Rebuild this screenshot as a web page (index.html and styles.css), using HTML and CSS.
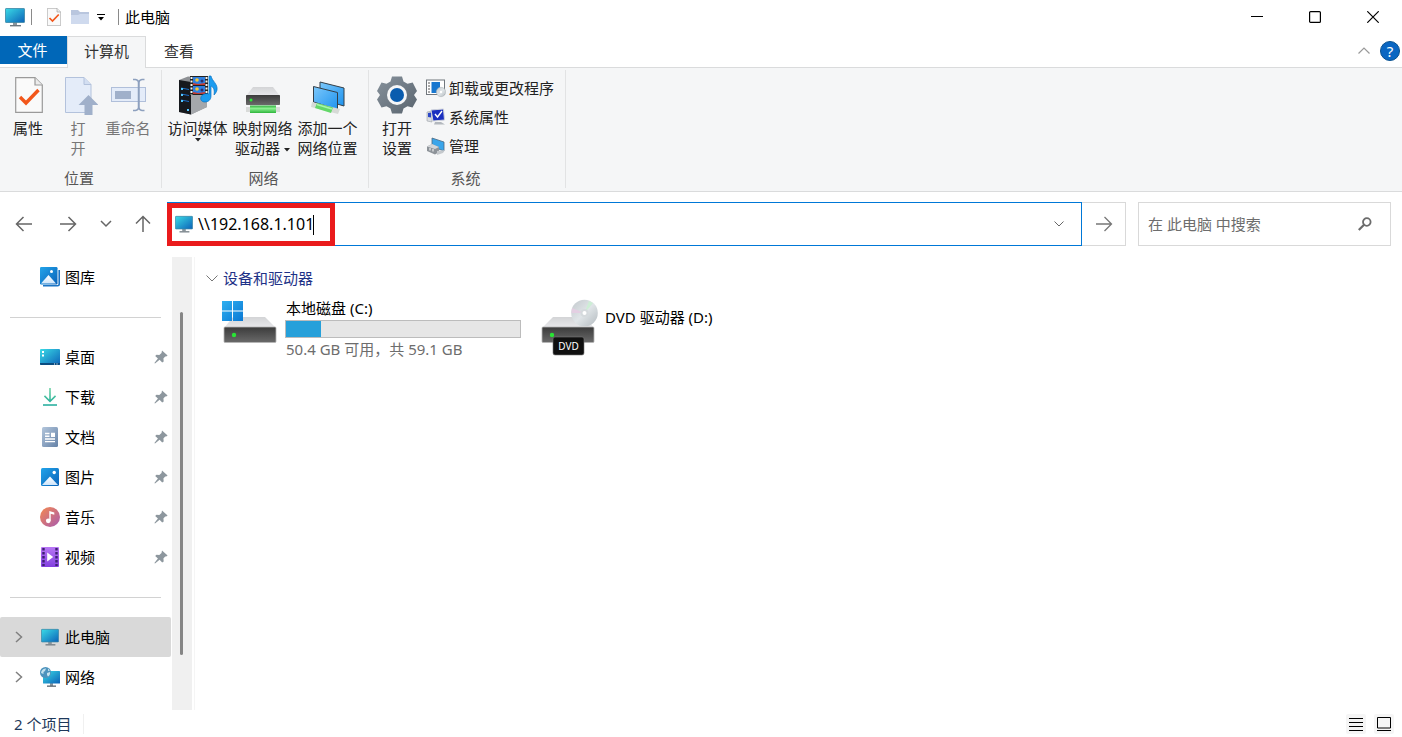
FILE: index.html
```html
<!DOCTYPE html>
<html lang="zh-CN">
	<head>
		<meta charset="UTF-8" />
		<meta name="viewport" content="width=device-width, initial-scale=1.0" />
		<title>此电脑</title>
		<link rel="stylesheet" href="styles.css">
	</head>
	<body>
		<!-- shared gradients and symbols -->
		<svg class="defs" width="0" height="0" aria-hidden="true">
			<defs>
				<linearGradient id="screen" x1="0" y1="0" x2="1" y2="1">
					<stop offset="0" stop-color="#3adbe6" />
					<stop offset="1" stop-color="#0c62b8" />
				</linearGradient>
				<linearGradient id="blue" x1="0" y1="0" x2="1" y2="1">
					<stop offset="0" stop-color="#22a4ea" />
					<stop offset="1" stop-color="#0a62b8" />
				</linearGradient>
				<linearGradient id="flag" x1="0" y1="0" x2="1" y2="1">
					<stop offset="0" stop-color="#2fb0f0" />
					<stop offset="1" stop-color="#0a78d4" />
				</linearGradient>
				<linearGradient id="snow" x1="0" y1="0" x2="0" y2="1">
					<stop offset="0" stop-color="#ffffff" />
					<stop offset="1" stop-color="#cfe5fa" />
				</linearGradient>
				<linearGradient id="pane" x1="0" y1="0" x2="1" y2="1">
					<stop offset="0" stop-color="#7cc8fb" />
					<stop offset="1" stop-color="#1e93ee" />
				</linearGradient>
				<linearGradient id="pipe" x1="0" y1="0" x2="0" y2="1">
					<stop offset="0" stop-color="#2fae3c" />
					<stop offset=".4" stop-color="#8bf090" />
					<stop offset="1" stop-color="#2eb53c" />
				</linearGradient>
				<linearGradient id="lid" x1="0" y1="0" x2="0" y2="1">
					<stop offset="0" stop-color="#d3d4d6" />
					<stop offset="1" stop-color="#e9e9ec" />
				</linearGradient>
				<linearGradient id="case" x1="0" y1="0" x2="0" y2="1">
					<stop offset="0" stop-color="#3b3b3b" />
					<stop offset="1" stop-color="#6a6a6a" />
				</linearGradient>
				<linearGradient id="down" x1="0" y1="0" x2="0" y2="1">
					<stop offset="0" stop-color="#6fd3a5" />
					<stop offset="1" stop-color="#1aa99a" />
				</linearGradient>
				<linearGradient id="doc" x1="0" y1="0" x2="1" y2="1">
					<stop offset="0" stop-color="#b3c6dc" />
					<stop offset="1" stop-color="#6582a7" />
				</linearGradient>
				<linearGradient id="music" x1="0" y1="0" x2="1" y2="1">
					<stop offset="0" stop-color="#f5894f" />
					<stop offset="1" stop-color="#a85bb0" />
				</linearGradient>
				<linearGradient id="video" x1="0" y1="0" x2="0" y2="1">
					<stop offset="0" stop-color="#b876f5" />
					<stop offset="1" stop-color="#8240df" />
				</linearGradient>
				<linearGradient id="gear" x1="0" y1="0" x2="1" y2="1">
					<stop offset="0" stop-color="#87929c" />
					<stop offset="1" stop-color="#59646e" />
				</linearGradient>
				<linearGradient id="disc" x1="0" y1="0" x2="1" y2="1">
					<stop offset="0" stop-color="#c2c8cc" />
					<stop offset=".5" stop-color="#e0e5e8" />
					<stop offset="1" stop-color="#b3babf" />
				</linearGradient>
			</defs>
			<symbol id="i-monitor" viewBox="0 0 20 20">
				<path d="M8 15h4v3H8z" fill="#8b959d" />
				<path d="M5 18h11v1.4H5z" fill="#6d7880" />
				<rect x=".5" y="1.5" width="19" height="14" rx=".6" fill="url(#screen)" stroke="#3b86a5" stroke-width=".8" />
			</symbol>
			<symbol id="i-page" viewBox="0 0 28 36">
				<path d="M.7.7H20L27.3 8V35.3H.7z" fill="#fafafa" stroke="#9a9a9a" stroke-width="1.2" />
				<path d="M20 .7V8h7.3" fill="#ececec" stroke="#9a9a9a" stroke-width="1.2" />
				<path d="M5 20l6 6L23.5 13" fill="none" stroke="#f2571b" stroke-width="3.4" />
			</symbol>
			<symbol id="i-pin" viewBox="0 0 14 14">
				<path d="M8 .6l5.6 4.8-1.4 1.2-1-.2-1.8 2.2.3 2.8-1.5 1.1-2.6-2.7L1 13.6l-.6-.5 3.5-4.6L1.2 6l1.3-1.3 2.8.2L7.5 2.9z" fill="#8d979e" />
			</symbol>
			<symbol id="i-drop" viewBox="0 0 6 4">
				<path d="M0 0h6L3 3.4z" fill="currentColor" />
			</symbol>
		</svg>

		<header class="titlebar">
			<svg class="app-icon" width="20" height="20"><use href="#i-monitor" /></svg>
			<span class="bar"></span>
			<button class="quick" aria-label="属性"><svg width="14" height="18"><use href="#i-page" /></svg></button>
			<button class="quick" aria-label="新建文件夹">
				<svg width="18" height="16" viewBox="0 0 18 16">
					<path d="M0 1h7l2 2h9v12H0z" fill="#b9c6de" />
					<path d="M0 6h7l2-1h9v10H0z" fill="#cfdaee" />
				</svg>
			</button>
			<button class="quick quick-menu" aria-label="自定义快速访问工具栏">
				<svg width="8" height="7" viewBox="0 0 8 7"><path d="M0 0h8v1H0zM1 3h6L4 6.5z" fill="#000" /></svg>
			</button>
			<span class="bar"></span>
			<h1 class="title">此电脑</h1>
			<div class="window-controls">
				<button aria-label="最小化"><svg width="12" height="12" viewBox="0 0 12 12"><path d="M0 5.5h12" stroke="#000" /></svg></button>
				<button aria-label="最大化"><svg width="12" height="12" viewBox="0 0 12 12"><rect x=".6" y=".6" width="10.8" height="10.8" rx="1" fill="none" stroke="#000" stroke-width="1.2" /></svg></button>
				<button aria-label="关闭"><svg width="12" height="12" viewBox="0 0 12 12"><path d="M.3.3l11.4 11.4M11.7.3L.3 11.7" stroke="#000" stroke-width="1.2" /></svg></button>
			</div>
		</header>

		<nav class="tabs">
			<button class="tab tab-file">文件</button>
			<button class="tab tab-active">计算机</button>
			<button class="tab">查看</button>
			<div class="tabs-end">
				<button class="collapse" aria-label="折叠功能区"><svg width="12" height="7" viewBox="0 0 12 7"><path d="M.5 6.5L6 1l5.5 5.5" fill="none" stroke="#999" stroke-width="1.2" /></svg></button>
				<button class="help" aria-label="帮助">?</button>
			</div>
		</nav>

		<section class="ribbon">
			<div class="group">
				<div class="group-items">
					<button class="large">
						<svg width="40" height="40" viewBox="0 0 40 40"><use href="#i-page" x="7" y="2" width="28" height="36" /></svg>
						<span>属性</span>
					</button>
					<button class="large" disabled>
						<svg width="40" height="40" viewBox="0 0 40 40">
							<path d="M7.5 2.500h18.500l7 7v28H7.500z" fill="#e4ecf9" stroke="#b3c2dc" />
							<path d="M26 2.500v7h7" fill="#d3dff2" stroke="#b3c2dc" />
							<path d="M30.500 20l10 10h-6v10h-8V30h-6z" fill="#a0b0ca" />
						</svg>
						<span>打<br>开</span>
					</button>
					<button class="large" disabled>
						<svg width="40" height="40" viewBox="0 0 40 40">
							<rect x="3.500" y="12.500" width="34" height="14" fill="#e4ecf9" stroke="#b0bfda" />
							<rect x="7" y="16" width="16" height="8" fill="#a0b0ca" />
							<path d="M25 4.500h2.500q3 .5 3 3v25q0 2.500-3 3H25M36.500 4.500H34q-3 .5-3 3v25q0 2.500 3 3h2.500" fill="none" stroke="#8da0be" stroke-width="1.500" />
						</svg>
						<span>重命名</span>
					</button>
				</div>
				<h2 class="group-name">位置</h2>
			</div>
			<div class="group group-network">
				<div class="group-items">
					<button class="large wide">
						<svg width="40" height="40" viewBox="0 0 40 40">
							<path d="M1 5l9-3.500L29 3v29L13 39.500 1 37z" fill="#8d9094" />
							<path d="M1 5l12 2v32.500L1 37z" fill="#16191d" />
							<path d="M13 7l16-4v29l-16 7.500z" fill="#a4a7ab" />
							<path d="M3 13l8 1.500M3 19l8 1.500M3 25l8 1.500" stroke="#1d6fc8" stroke-width="1" />
							<path d="M3 14h2M3 20h2M3 26h2M9 35h2" stroke="#55c7ff" stroke-width="2" />
							<rect x="12" y="1" width="18" height="19" fill="#222" />
							<path d="M13.500 2v18M28.500 2v18" stroke="#f4f4f4" stroke-width="2" stroke-dasharray="2 1.500" />
							<rect x="15" y="2" width="12" height="8" fill="#2f7fe0" />
							<rect x="15" y="11" width="12" height="8" fill="#2f7fe0" />
							<path d="M15 8l5 1 7-1v2H15zM15 17l5 1 7-1v2H15z" fill="#c43a30" />
							<circle cx="19" cy="5" r="1.800" fill="#f5c63a" />
							<circle cx="24" cy="6" r="1.500" fill="#2b2f6b" />
							<circle cx="19" cy="14" r="1.800" fill="#f5c63a" />
							<circle cx="24" cy="15" r="1.500" fill="#2b2f6b" />
							<path d="M31 1h2c1 5 7 8 6 14-1 3-2 4-3 5 1-6-1-8-3-9v10c0 4-3 6-6 6s-5-2-4-5c1-3 5-4 8-3z" fill="#1b9cf0" stroke="#0873c4" stroke-width=".7" />
						</svg>
						<span>访问媒体</span>
						<svg class="drop" width="6" height="4"><use href="#i-drop" /></svg>
					</button>
					<button class="large wide">
						<svg width="40" height="40" viewBox="0 0 40 40">
							<path d="M10 12h20l7 9H3z" fill="url(#lid)" />
							<rect x="3" y="20" width="34" height="10" rx=".8" fill="url(#case)" />
							<circle cx="8" cy="25" r="1.500" fill="#2bea35" />
							<path d="M3 32h34v5H3z" fill="#d9dbd9" />
							<path d="M7 30.500h26v7.500H7z" fill="url(#pipe)" />
						</svg>
						<span>映射网络<br>驱动器<svg class="drop-inline" width="6" height="4"><use href="#i-drop" /></svg></span>
					</button>
					<button class="large wide">
						<svg width="40" height="40" viewBox="0 0 40 40">
							<path d="M12 7l24 6v18l-24-7z" fill="url(#pane)" stroke="#333f48" />
							<path d="M5.500 11.500l24 6v17l-24-7.500z" fill="url(#pane)" stroke="#333f48" />
							<path d="M4 27l28 7-2 5L3 32z" fill="#d6dad6" />
							<path d="M9 28l16 4.500-2 5.500-16-5z" fill="#63d869" />
							<path d="M9 29.500l15 4.500" stroke="#a8f5ab" stroke-width="1.500" />
						</svg>
						<span>添加一个<br>网络位置</span>
					</button>
				</div>
				<h2 class="group-name">网络</h2>
			</div>
			<div class="group group-system">
				<div class="group-items">
					<button class="large">
						<svg width="40" height="40" viewBox="0 0 40 40">
							<path d="M15 1.500h10l1.500 5 4 2.300 5.200-1.300L40 16l-3 4 3 4.500-4.500 8-5-1.300-4 2.300L25 38.500H15l-1.500-5-4-2.300-5 1.300L0 24.500 3 20l-3-4 4.500-8.500 5 1.300 4-2.300z" fill="url(#gear)" />
							<circle cx="20" cy="20" r="10" fill="#f5f6f7" />
							<circle cx="20" cy="20" r="7" fill="#0a5cae" />
						</svg>
						<span>打开<br>设置</span>
					</button>
					<div class="small-list">
						<button class="small">
							<svg width="20" height="20" viewBox="0 0 20 20">
								<rect x=".5" y="2" width="18" height="14.500" fill="#fff" stroke="#71777d" />
								<path d="M2 5h2M2 8h2M2 11h2M2 14h2" stroke="#555" />
								<rect x="5.500" y="4" width="8.500" height="11" fill="#1877cf" />
								<circle cx="15" cy="14" r="4.700" fill="url(#disc)" stroke="#a9b0b5" stroke-width=".5" />
								<circle cx="15" cy="14" r="1.200" fill="#fff" />
							</svg>
							卸载或更改程序
						</button>
						<button class="small">
							<svg width="20" height="20" viewBox="0 0 20 20">
								<path d="M1 5l5-1v11l-5-1z" fill="#d9dce0" stroke="#9ba1a8" stroke-width=".6" />
								<path d="M2 6l3-.5v5L2 10z" fill="#2b47c8" />
								<path d="M5 3l12.500-1 1 11L7 14z" fill="#1a2fc0" stroke="#cfd3da" />
								<path d="M9 7l2.500 3L16 4" fill="none" stroke="#fff" stroke-width="1.400" />
								<path d="M9 15h6l4 2.500H8z" fill="#b3b8be" />
							</svg>
							系统属性
						</button>
						<button class="small">
							<svg width="20" height="20" viewBox="0 0 20 20">
								<path d="M6 2l12 4v9L6 10.500z" fill="#3aa5ea" stroke="#4b6880" stroke-width=".8" />
								<path d="M1 10.500l5-2.500 7 3v5l-4 2.500-8-3.500z" fill="#8d9399" />
								<path d="M1 10.500l5-2.500 7 3-4 2z" fill="#d3d6d9" />
								<path d="M4 12v2.500M7 13v2.500" stroke="#fff" />
								<path d="M11 15l8-1-2 3-6 2z" fill="#c5c9cd" />
							</svg>
							管理
						</button>
					</div>
				</div>
				<h2 class="group-name">系统</h2>
			</div>
		</section>

		<section class="navbar">
			<div class="history">
				<button aria-label="后退"><svg width="18" height="16" viewBox="0 0 18 16"><path d="M17 8H1.500M8.500 1l-7 7 7 7" /></svg></button>
				<button aria-label="前进"><svg width="18" height="16" viewBox="0 0 18 16"><path d="M1 8h15.500M9.500 1l7 7-7 7" /></svg></button>
				<button class="narrow" aria-label="最近浏览的位置"><svg width="12" height="8" viewBox="0 0 12 8"><path d="M1 1l5 5 5-5" /></svg></button>
				<button class="up" aria-label="上移"><svg width="16" height="18" viewBox="0 0 16 18"><path d="M8 17V1.500M1 8.500l7-7 7 7" /></svg></button>
			</div>
			<div class="address">
				<svg class="address-icon" width="18" height="18"><use href="#i-monitor" /></svg>
				<input class="address-input" type="text" aria-label="地址" value="\\192.168.1.101" />
				<button class="address-drop" aria-label="以前的位置"><svg width="10" height="6" viewBox="0 0 10 6"><path d="M.5.5L5 5 9.500.5" fill="none" stroke="#666" /></svg></button>
				<div class="highlight"><span class="cursor"></span></div>
			</div>
			<button class="go" aria-label="转到"><svg width="18" height="16" viewBox="0 0 18 16"><path d="M1 8h15.500M9.500 1l7 7-7 7" fill="none" stroke="#777" stroke-width="1.300" /></svg></button>
			<div class="search">
				<input type="text" aria-label="搜索" placeholder="在 此电脑 中搜索" />
				<svg width="14" height="14" viewBox="0 0 14 14"><circle cx="8.800" cy="5" r="3.800" fill="none" stroke="#6b6b6b" stroke-width="1.800" /><path d="M6 7.800L.8 13" stroke="#6b6b6b" stroke-width="2.200" /></svg>
			</div>
		</section>

		<div class="main">
			<aside class="sidebar">
				<a class="place" href="#">
					<svg class="place-icon" viewBox="0 0 20 20">
						<path d="M3 18.800h14.500q1.700 0 1.700-1.700V3" fill="none" stroke="#1b74c5" stroke-width="1.600" />
						<rect width="17.500" height="17.500" rx="1.200" fill="url(#blue)" />
						<path d="M1 16.500L8.500 8l7.500 8.500z" fill="url(#snow)" />
						<circle cx="11.500" cy="4.500" r="1.500" fill="#fff" />
					</svg>
					图库
				</a>
				<hr class="divider">
				<a class="place" href="#">
					<svg class="place-icon" viewBox="0 0 20 20">
						<rect y="2" width="20" height="16" rx="1" fill="url(#screen)" />
						<path d="M0 16h20v1q0 1-1 1H1q-1 0-1-1z" fill="#0b4c80" />
						<path d="M2 4h2v2H2zM2 7.500h2v2H2zM14 16.500h1v1h-1zM16.500 16.500h1v1h-1z" fill="#fff" />
					</svg>
					桌面
					<svg class="pin"><use href="#i-pin" /></svg>
				</a>
				<a class="place" href="#">
					<svg class="place-icon" viewBox="0 0 20 20">
						<path d="M9.200 1h1.600v11.500l4.200-4.200 1.100 1.100L10 15.600 3.900 9.400 5 8.300l4.200 4.200zM3 17.200h14v1.600H3z" fill="url(#down)" />
					</svg>
					下载
					<svg class="pin"><use href="#i-pin" /></svg>
				</a>
				<a class="place" href="#">
					<svg class="place-icon" viewBox="0 0 20 20">
						<rect x="2" width="16" height="20" rx="1.500" fill="url(#doc)" />
						<path d="M5 5.800h4.500v1.400H5zM5 8.600h4.500V10H5zM11 5.800h4V10h-4zM5 11.300h10v1.400H5zM5 13.900h10v1.400H5z" fill="#fff" />
					</svg>
					文档
					<svg class="pin"><use href="#i-pin" /></svg>
				</a>
				<a class="place" href="#">
					<svg class="place-icon" viewBox="0 0 20 20">
						<rect x="1" y="1" width="18" height="18" rx="1.500" fill="url(#blue)" />
						<path d="M2 18l8-8.500 8 8.500z" fill="url(#snow)" />
						<circle cx="14.200" cy="5.500" r="1.700" fill="#fff" />
					</svg>
					图片
					<svg class="pin"><use href="#i-pin" /></svg>
				</a>
				<a class="place" href="#">
					<svg class="place-icon" viewBox="0 0 20 20">
						<circle cx="10" cy="10" r="10" fill="url(#music)" />
						<circle cx="8.300" cy="13.800" r="2.400" fill="#fff" />
						<path d="M9.300 4l5 1.400v2.300l-3.600-1v7H9.300z" fill="#fff" />
					</svg>
					音乐
					<svg class="pin"><use href="#i-pin" /></svg>
				</a>
				<a class="place" href="#">
					<svg class="place-icon" viewBox="0 0 20 20">
						<rect x="1" width="18" height="20" rx="1" fill="url(#video)" />
						<path d="M3.500 1v18M16.500 1v18" stroke="#3d1f73" stroke-width="2.400" stroke-dasharray="2.500 1.500" />
						<path d="M7.200 5.500v9l6-4.500z" fill="#fff" />
					</svg>
					视频
					<svg class="pin"><use href="#i-pin" /></svg>
				</a>
				<hr class="divider">
				<a class="place place-tree place-selected" href="#">
					<svg class="expand" viewBox="0 0 8 12"><path d="M1 1l5.500 5L1 11" /></svg>
					<svg class="place-icon place-icon-inset"><use href="#i-monitor" /></svg>
					此电脑
				</a>
				<a class="place place-tree" href="#">
					<svg class="expand" viewBox="0 0 8 12"><path d="M1 1l5.500 5L1 11" /></svg>
					<svg class="place-icon" viewBox="0 0 20 20">
						<path d="M10 16h3v3h-3z" fill="#8b959d" />
						<path d="M7 18.500h9v1.300H7z" fill="#55626c" />
						<rect x="3" y="4" width="17" height="12.500" rx=".5" fill="url(#screen)" />
						<circle cx="5.500" cy="5.500" r="5.500" fill="#4d93bd" />
						<path d="M1.500 4Q3 1 6 1.500L5 4 3.500 5v2L1 6zM7 6l3-1q.5 3-2 4.500L7 8zM8 1.500l2 2-2 .5z" fill="#c5e2ee" />
					</svg>
					网络
				</a>
			</aside>
			<div class="scrollbar"><div class="thumb"></div></div>
			<main class="content">
				<h2 class="section-name">
					<svg width="12" height="7" viewBox="0 0 12 7"><path d="M.5.5L6 6 11.500.5" fill="none" stroke="#777" /></svg>
					设备和驱动器
				</h2>
				<div class="drives">
					<article class="drive">
						<svg width="58" height="58" viewBox="0 0 58 58">
							<path d="M12 18h32l11 11H3z" fill="url(#lid)" />
							<rect x="3" y="28" width="52" height="15.500" rx="1" fill="url(#case)" stroke="#b5b5b5" stroke-width=".8" />
							<circle cx="13" cy="36" r="2.200" fill="#29e435" />
							<path d="M1 2h10v9.500H1zM12 2h10v9.500H12zM1 12.500h10V22H1zM12 12.500h10V22H12z" fill="url(#flag)" />
						</svg>
						<div class="drive-info">
							<h3>本地磁盘 (C:)</h3>
							<div class="usage" role="img" aria-label="已用空间"><div class="used" style="width: 15%"></div></div>
							<p>50.4 GB 可用，共 59.1 GB</p>
						</div>
					</article>
					<article class="drive">
						<svg width="58" height="58" viewBox="0 0 58 58">
							<path d="M12 18h32l9 11H1z" fill="url(#lid)" />
							<rect x="1" y="28" width="52" height="15.500" rx="1" fill="url(#case)" stroke="#b5b5b5" stroke-width=".8" />
							<circle cx="11" cy="36" r="2.200" fill="#29e435" />
							<circle cx="43.500" cy="14" r="13.300" fill="url(#disc)" />
							<path d="M43.500 14L31 9l-.5 5z" fill="#e3cfe2" />
							<path d="M43.500 14L48 2l4 2z" fill="#cdeed5" />
							<circle cx="43.500" cy="14" r="4" fill="#d5dadd" />
							<circle cx="43.500" cy="14" r="2" fill="#fff" />
							<rect x="12" y="38" width="31" height="18" rx="2" fill="#101010" stroke="#777" stroke-width=".6" />
							<text class="disc-label" x="27.500" y="51" text-anchor="middle">DVD</text>
						</svg>
						<div class="drive-info">
							<h3 class="plain">DVD 驱动器 (D:)</h3>
						</div>
					</article>
				</div>
			</main>
		</div>

		<footer class="status">
			<span class="count">2 个项目</span>
			<div class="views">
				<button aria-label="详细信息"><svg width="14" height="14" viewBox="0 0 14 14"><path d="M0 1.500h14M0 5.500h14M0 9.500h14M0 13.500h14" stroke="#000" /></svg></button>
				<button aria-label="大图标"><svg width="14" height="14" viewBox="0 0 14 14"><path d="M.5.500h13v10.500H.5zM0 13.500h14" fill="none" stroke="#000" /></svg></button>
			</div>
		</footer>
	</body>
</html>
```

FILE: styles.css
```css
* {
	box-sizing: border-box;
}

body {
	margin: 0;
	min-height: 100vh;
	display: flex;
	flex-direction: column;
	background: #fff;
	color: #000;
	font: 15px/20px "Noto Sans", "Noto Sans CJK SC", sans-serif;
}

h1,
h2,
h3,
p {
	margin: 0;
	font-size: 15px;
	font-weight: normal;
}

button,
input {
	font: inherit;
	color: inherit;
	border: 0;
	padding: 0;
	background: none;
}

svg {
	flex: none;
}

.defs {
	position: absolute;
}

/* title bar */
.titlebar {
	display: flex;
	align-items: center;
	height: 36px;
	padding: 0 0 2px 5px;
}

.bar {
	width: 1px;
	height: 16px;
	margin: 0 6px;
	background: #8a8a8a;
}

.quick {
	display: flex;
	justify-content: center;
	width: 26px;
}

.titlebar .quick-menu {
	width: 16px;
}

.app-icon + .bar {
	margin-right: 9px;
}

.quick-menu + .bar {
	margin-left: 9px;
}

.window-controls {
	display: flex;
	margin-left: auto;
}

.window-controls button {
	display: flex;
	align-items: center;
	justify-content: center;
	width: 58px;
	height: 34px;
}

/* tabs */
.tabs {
	display: flex;
	height: 32px;
	border-bottom: 1px solid #dadbdc;
}

.tab {
	width: 66px;
	padding-bottom: 2px;
	color: #333;
}

.tab-file {
	width: 67px;
	height: 28px;
	padding: 0 2px 0 0;
	background: #0067b8;
	color: #fff;
}

.tab-active {
	width: 79px;
	height: 32px;
	padding-bottom: 4px;
	border: 1px solid #dadbdc;
	border-bottom: 0;
	background: #f5f6f7;
}

.tabs-end {
	display: flex;
	align-items: center;
	gap: 10px;
	margin-left: auto;
	padding: 0 2px 2px 0;
}

.collapse {
	display: flex;
}

.help {
	width: 20px;
	height: 20px;
	border: 1px solid #08518f;
	border-radius: 50%;
	background: #0a66c2;
	color: #fff;
	line-height: 18px;
}

/* ribbon */
.ribbon {
	display: flex;
	padding: 2px 0 3px;
	border-bottom: 1px solid #dadbdc;
	background: #f5f6f7;
}

.group {
	width: 162px;
	padding: 4px 3px 0;
	border-right: 1px solid #e2e3e4;
}

.group-network {
	width: 207px;
}

.group-system {
	width: 197px;
}

.group-items {
	display: flex;
	height: 94px;
}

.group-name {
	padding-right: 3px;
	color: #555;
	text-align: center;
}

.large {
	display: flex;
	flex-direction: column;
	align-items: center;
	width: 50px;
	padding-top: 1px;
	color: #222;
}

.large span {
	margin-top: 3px;
	white-space: nowrap;
}

.large:disabled {
	color: #777;
}

.wide {
	width: 65px;
}

.drop-inline {
	margin-left: 4px;
	vertical-align: middle;
}

.small-list {
	display: flex;
	flex-direction: column;
	padding-left: 4px;
}

.small {
	display: flex;
	align-items: center;
	gap: 3px;
	height: 29px;
	padding-bottom: 2px;
	color: #222;
}

/* address row */
.navbar {
	display: flex;
	padding: 10px 11px 11px 0;
}

.history {
	display: flex;
	width: 167px;
	padding-left: 2px;
}

.history button {
	display: flex;
	align-items: center;
	justify-content: center;
	width: 44px;
}

.history .narrow {
	width: 32px;
}

.history .up {
	width: 41px;
}

.history path {
	fill: none;
	stroke: #666;
	stroke-width: 1.5;
}

.address {
	position: relative;
	display: flex;
	align-items: center;
	flex: 1;
	height: 44px;
	padding-left: 7px;
	border: 1px solid #0078d7;
}

.address-input {
	flex: 1;
	min-width: 0;
	margin-left: 5px;
	font-size: 16px;
	outline: 0;
}

.address-drop {
	display: flex;
	justify-content: center;
	width: 44px;
}

/* red frame drawn over the start of the address box */
.highlight {
	position: absolute;
	top: 0;
	left: -1px;
	display: flex;
	align-items: center;
	justify-content: flex-end;
	width: 168px;
	height: 43px;
	padding-right: 16px;
	border: 5px solid #ea1b1c;
	pointer-events: none;
}

.cursor {
	width: 1px;
	height: 20px;
	background: #000;
}

.go {
	display: flex;
	align-items: center;
	justify-content: center;
	width: 44px;
	border: 1px solid #d9d9d9;
	border-left: 0;
}

.search {
	display: flex;
	align-items: center;
	width: 253px;
	margin-left: 12px;
	padding: 0 18px 0 9px;
	border: 1px solid #d9d9d9;
}

.search input {
	flex: 1;
	min-width: 0;
}

.search input::placeholder {
	color: #6d6d6d;
	opacity: 1;
}

/* sidebar and files */
.main {
	display: flex;
	flex: 1;
}

.sidebar {
	width: 171px;
}

.place {
	display: flex;
	align-items: center;
	gap: 5px;
	height: 40px;
	padding: 0 3px 0 40px;
	color: #000;
	text-decoration: none;
}

.place-tree {
	padding-left: 15px;
}

.place-selected {
	border-radius: 2px;
	background: #d9d9d9;
}

.place-icon {
	width: 20px;
	height: 20px;
}

.place-icon-inset {
	padding: 1px;
}

.expand {
	width: 8px;
	height: 12px;
	margin-right: 12px;
}

.expand path {
	fill: none;
	stroke: #808080;
	stroke-width: 1.5;
}

.pin {
	width: 14px;
	height: 14px;
	margin-left: auto;
}

.divider {
	height: 1px;
	margin: 20px 10px 19px;
	border: 0;
	background: #d2d2d2;
}

.scrollbar {
	width: 20px;
	margin-left: 1px;
	padding: 55px 9px 55px 8px;
	background: #f0f0f0;
}

.thumb {
	height: 100%;
	border-radius: 2px;
	background: #858585;
}

.content {
	flex: 1;
	margin-left: 2px;
	padding: 11px;
	border-left: 1px solid #f5f5f5;
}

.section-name {
	display: flex;
	align-items: center;
	gap: 5px;
	color: #1e3287;
}

.drives {
	display: flex;
	flex-wrap: wrap;
	gap: 20px;
	padding: 11px 15px;
}

.drive {
	display: flex;
	gap: 6px;
	width: 300px;
}

.drive-info {
	flex: 1;
}

.drive-info h3 {
	padding-left: 1px;
	line-height: 18px;
}

.drive-info .plain {
	padding: 9px 0;
}

.drive-info p {
	padding: 1px;
	color: #6d6d6d;
}

.usage {
	height: 18px;
	margin-top: 3px;
	border: 1px solid #bcbcbc;
	background: #e6e6e6;
}

.used {
	height: 100%;
	background: #26a0da;
}

.disc-label {
	fill: #fff;
	font-size: 10px;
}

/* status bar */
.status {
	display: flex;
	align-items: center;
	height: 27px;
	padding: 0 8px 0 14px;
}

.count {
	padding-right: 12px;
	border-right: 1px solid #f0f0f0;
	color: #1e395b;
}

.views {
	display: flex;
	gap: 8px;
	margin-left: auto;
}

.views button {
	display: flex;
	align-items: center;
	justify-content: center;
	width: 20px;
	height: 20px;
	border-radius: 2px;
	background: #f5f5f5;
}
```
